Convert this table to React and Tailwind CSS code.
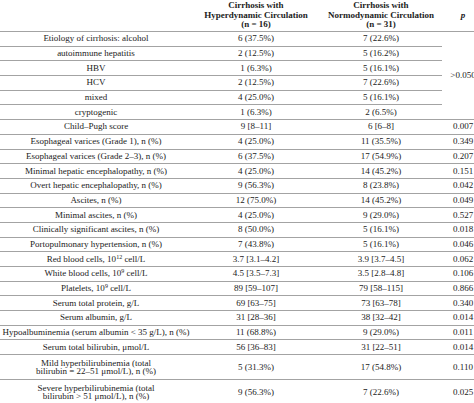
import React from "react";

const groupRows = [
  ["Etiology of cirrhosis: alcohol", "6 (37.5%)", "7 (22.6%)"],
  ["autoimmune hepatitis", "2 (12.5%)", "5 (16.2%)"],
  ["HBV", "1 (6.3%)", "5 (16.1%)"],
  ["HCV", "2 (12.5%)", "7 (22.6%)"],
  ["mixed", "4 (25.0%)", "5 (16.1%)"],
  ["cryptogenic", "1 (6.3%)", "2 (6.5%)"],
];

const rows = [
  ["Child–Pugh score", "9 [8–11]", "6 [6–8]", "0.007"],
  ["Esophageal varices (Grade 1), n (%)", "4 (25.0%)", "11 (35.5%)", "0.349"],
  ["Esophageal varices (Grade 2–3), n (%)", "6 (37.5%)", "17 (54.9%)", "0.207"],
  ["Minimal hepatic encephalopathy, n (%)", "4 (25.0%)", "14 (45.2%)", "0.151"],
  ["Overt hepatic encephalopathy, n (%)", "9 (56.3%)", "8 (23.8%)", "0.042"],
  ["Ascites, n (%)", "12 (75.0%)", "14 (45.2%)", "0.049"],
  ["Minimal ascites, n (%)", "4 (25.0%)", "9 (29.0%)", "0.527"],
  ["Clinically significant ascites, n (%)", "8 (50.0%)", "5 (16.1%)", "0.018"],
  ["Portopulmonary hypertension, n (%)", "7 (43.8%)", "5 (16.1%)", "0.046"],
  [<>Red blood cells, 10<sup className="text-[6px]">12</sup> cell/L</>, "3.7 [3.1–4.2]", "3.9 [3.7–4.5]", "0.062"],
  [<>White blood cells, 10<sup className="text-[6px]">9</sup> cell/L</>, "4.5 [3.5–7.3]", "3.5 [2.8–4.8]", "0.106"],
  [<>Platelets, 10<sup className="text-[6px]">9</sup> cell/L</>, "89 [59–107]", "79 [58–115]", "0.866"],
  ["Serum total protein, g/L", "69 [63–75]", "73 [63–78]", "0.340"],
  ["Serum albumin, g/L", "31 [28–36]", "38 [32–42]", "0.014"],
  ["Hypoalbuminemia (serum albumin < 35 g/L), n (%)", "11 (68.8%)", "9 (29.0%)", "0.011"],
  ["Serum total bilirubin, μmol/L", "56 [36–83]", "31 [22–51]", "0.014"],
];

const tallRows = [
  [<>Mild hyperbilirubinemia (total<br />bilirubin = 22–51 μmol/L), n (%)</>, "5 (31.3%)", "17 (54.8%)", "0.110"],
  [<>Severe hyperbilirubinemia (total<br />bilirubin &gt; 51 μmol/L), n (%)</>, "9 (56.3%)", "7 (22.6%)", "0.025"],
];

const line = "border-b-[1.5px] border-[#a3a3a3]";

export default function App() {
  return (
    <div
      className="w-[474px] h-[403px] overflow-hidden bg-white text-[#222] text-[9px]"
      style={{ fontFamily: '"Liberation Serif", "Times New Roman", serif' }}
    >
      <table className="table-fixed border-collapse w-[484px] text-center leading-[9px]">
        <colgroup>
          <col className="w-[192px]" />
          <col className="w-[128px]" />
          <col className="w-[122px]" />
          <col className="w-[42px]" />
        </colgroup>
        <thead>
          <tr className={`h-[31.5px] ${line} border-[#8f8f8f]`}>
            <th></th>
            <th className="font-bold leading-[9.5px] align-middle">
              Cirrhosis with
              <br />
              Hyperdynamic Circulation
              <br />
              (n = 16)
            </th>
            <th className="font-bold leading-[9.5px] align-middle">
              Cirrhosis with
              <br />
              Normodynamic Circulation
              <br />
              (n = 31)
            </th>
            <th className="font-bold italic">p</th>
          </tr>
        </thead>
        <tbody>
          {groupRows.map((r, i) => (
            <tr key={i} className={`h-[14.7px] ${line}`}>
              <td className="whitespace-nowrap">{r[0]}</td>
              <td>{r[1]}</td>
              <td>{r[2]}</td>
              {i === 0 && (
                <td rowSpan={6} className={`align-middle ${line}`}>
                  &gt;0.050
                </td>
              )}
            </tr>
          ))}
          {rows.map((r, i) => (
            <tr key={i} className={`h-[14.7px] ${line}`}>
              <td className="whitespace-nowrap">{r[0]}</td>
              <td>{r[1]}</td>
              <td>{r[2]}</td>
              <td>{r[3]}</td>
            </tr>
          ))}
          {tallRows.map((r, i) => (
            <tr key={i} className={`h-[25px] ${i === 0 ? line : ""}`}>
              <td className="leading-[8.5px]">{r[0]}</td>
              <td>{r[1]}</td>
              <td>{r[2]}</td>
              <td>{r[3]}</td>
            </tr>
          ))}
        </tbody>
      </table>
    </div>
  );
}
